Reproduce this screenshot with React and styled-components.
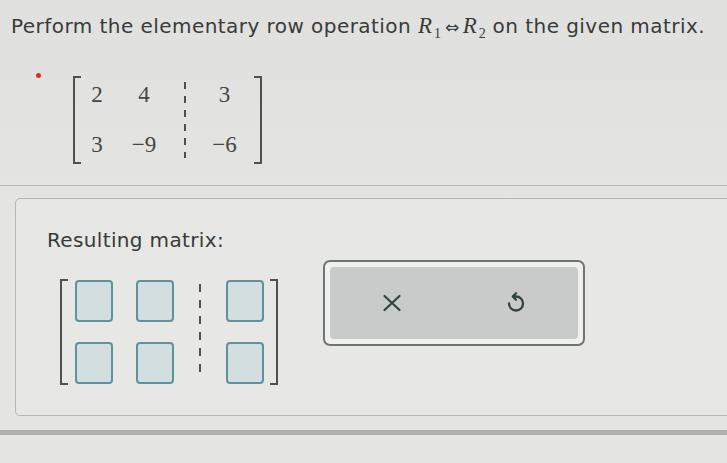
import React from "react";
import styled, { createGlobalStyle } from "styled-components";

const GlobalStyle = createGlobalStyle`
  html, body {
    margin: 0;
    padding: 0;
    background: #e3e4e1;
    overflow: hidden;
  }
  body {
    font-family: "DejaVu Sans", Verdana, sans-serif;
    color: #383a39;
  }
`;

const Page = styled.div`
  width: 727px;
  height: 463px;
  display: flex;
  flex-direction: column;
  background: linear-gradient(180deg, #e0e1de 0%, #e5e6e3 55%, #e4e5e2 100%);
`;

const Question = styled.div`
  padding: 14px 0 0 11px;
  font-size: 20px;
  letter-spacing: 0.45px;
  line-height: 24px;
  white-space: nowrap;
`;

const MathVar = styled.span`
  font-family: "Liberation Serif", "Times New Roman", serif;
  font-style: italic;
  font-size: 23px;
  letter-spacing: 0;
  sub {
    font-style: normal;
    font-size: 14px;
    vertical-align: -5px;
    line-height: 0;
    margin-left: 2px;
  }
`;

const Arrow = styled.span`
  font-size: 17px;
  margin: 0 3px 0 4px;
`;

const GivenRow = styled.div`
  display: flex;
  align-items: flex-start;
  padding: 37px 0 0 36px;
`;

const Dot = styled.span`
  width: 5px;
  height: 5px;
  border-radius: 50%;
  background: #d9302a;
  margin: -3px 32px 0 0;
`;

const Matrix = styled.div`
  display: flex;
  align-items: stretch;
`;

const Bracket = styled.div`
  width: 6px;
  border: 2px solid #4f5150;
  ${(p) => (p.$side === "left" ? "border-right: none;" : "border-left: none;")}
`;

const Grid = styled.div`
  display: grid;
  grid-template-columns: ${(p) => p.$cols};
  grid-template-rows: ${(p) => p.$rows};
  row-gap: ${(p) => p.$gap}px;
  align-items: center;
  justify-items: center;
  padding: ${(p) => p.$pad};
`;

const Num = styled.span`
  font-family: "Liberation Serif", "Times New Roman", serif;
  font-size: 23px;
  color: #444645;
  grid-column: ${(p) => p.$col};
  grid-row: ${(p) => p.$row};
`;

const Divider = styled.div`
  grid-column: 3;
  grid-row: 1 / span 2;
  align-self: stretch;
  width: 1.6px;
  background: repeating-linear-gradient(
    to bottom,
    #4d4f4e 0 ${(p) => p.$dash}px,
    transparent ${(p) => p.$dash}px ${(p) => p.$dash * 2}px
  );
  margin: ${(p) => p.$inset};
`;

const TopRule = styled.div`
  height: 1px;
  background: #b7bab7;
  margin-top: 21px;
`;

const Panel = styled.div`
  margin: 12px -6px 0 15px;
  height: 218px;
  border: 1.5px solid #b4b7b4;
  border-radius: 5px;
  background: #e7e8e5;
  padding: 29px 0 0 31px;
  box-sizing: border-box;
`;

const Label = styled.div`
  font-size: 20px;
  letter-spacing: 0.35px;
  line-height: 24px;
`;

const AnswerRow = styled.div`
  display: flex;
  align-items: flex-start;
  margin: 27px 0 0 13px;
  gap: 45px;
`;

const Cell = styled.div`
  width: 38px;
  height: 42px;
  box-sizing: border-box;
  border: 2.5px solid #5e939e;
  border-radius: 4px;
  background: #d3dee0;
  grid-column: ${(p) => p.$col};
  grid-row: ${(p) => p.$row};
  justify-self: ${(p) => p.$align || "center"};
`;

const Tools = styled.div`
  margin-top: -19px;
  width: 262px;
  height: 86px;
  box-sizing: border-box;
  border: 2px solid #6f7572;
  border-radius: 7px;
  background: #f0f1ee;
  padding: 5px;
`;

const ToolBar = styled.div`
  height: 100%;
  border-radius: 4px;
  background: #c8cbca;
  display: grid;
  grid-template-columns: 1fr 1fr;
  align-items: center;
  justify-items: center;
`;

const ToolButton = styled.button`
  border: none;
  background: transparent;
  padding: 0;
  width: 30px;
  height: 30px;
  display: flex;
  align-items: center;
  justify-content: center;
  color: #33443f;
`;

const BottomRule = styled.div`
  height: 5px;
  background: #adb1af;
  margin-top: 14px;
`;

function App() {
  return (
    <Page>
      <GlobalStyle />
      <Question>
        Perform the elementary row operation{" "}
        <MathVar>
          R<sub>1</sub>
        </MathVar>
        <Arrow>⇔</Arrow>
        <MathVar>
          R<sub>2</sub>
        </MathVar>{" "}
        on the given matrix.
      </Question>

      <GivenRow>
        <Dot />
        <Matrix>
          <Bracket $side="left" />
          <Grid $cols="32px 62px 20px 59px" $rows="38px 38px" $gap={12} $pad="0">
            <Num $col={1} $row={1}>2</Num>
            <Num $col={2} $row={1}>4</Num>
            <Num $col={4} $row={1}>3</Num>
            <Num $col={1} $row={2}>3</Num>
            <Num $col={2} $row={2}>−9</Num>
            <Num $col={4} $row={2}>−6</Num>
            <Divider $dash={7} $inset="6px 0" />
          </Grid>
          <Bracket $side="right" />
        </Matrix>
      </GivenRow>

      <TopRule />

      <Panel>
        <Label>Resulting matrix:</Label>
        <AnswerRow>
          <Matrix>
            <Bracket $side="left" />
            <Grid $cols="38px 61px 52px 38px" $rows="42px 42px" $gap={20} $pad="1px 6px 1px 7px">
              <Cell $col={1} $row={1} />
              <Cell $col={2} $row={1} $align="end" />
              <Cell $col={4} $row={1} />
              <Cell $col={1} $row={2} />
              <Cell $col={2} $row={2} $align="end" />
              <Cell $col={4} $row={2} />
              <Divider $dash={8} $inset="4px 0" />
            </Grid>
            <Bracket $side="right" />
          </Matrix>

          <Tools>
            <ToolBar>
              <ToolButton aria-label="Clear">
                <svg width="20" height="20" viewBox="0 0 20 20" fill="none" stroke="currentColor" strokeWidth="2.2" strokeLinecap="round">
                  <path d="M2.5 3 L17.5 17 M17.5 3 L2.5 17" />
                </svg>
              </ToolButton>
              <ToolButton aria-label="Undo">
                <svg width="24" height="24" viewBox="0 0 24 24" fill="none" stroke="currentColor" strokeWidth="2.3" strokeLinecap="round" strokeLinejoin="round">
                  <path d="M9 5.5 H12 A7 7 0 1 1 5 12.5" />
                  <path d="M12 2.3 L8.8 5.5 L12 8.7" />
                </svg>
              </ToolButton>
            </ToolBar>
          </Tools>
        </AnswerRow>
      </Panel>

      <BottomRule />
    </Page>
  );
}

export default App;
